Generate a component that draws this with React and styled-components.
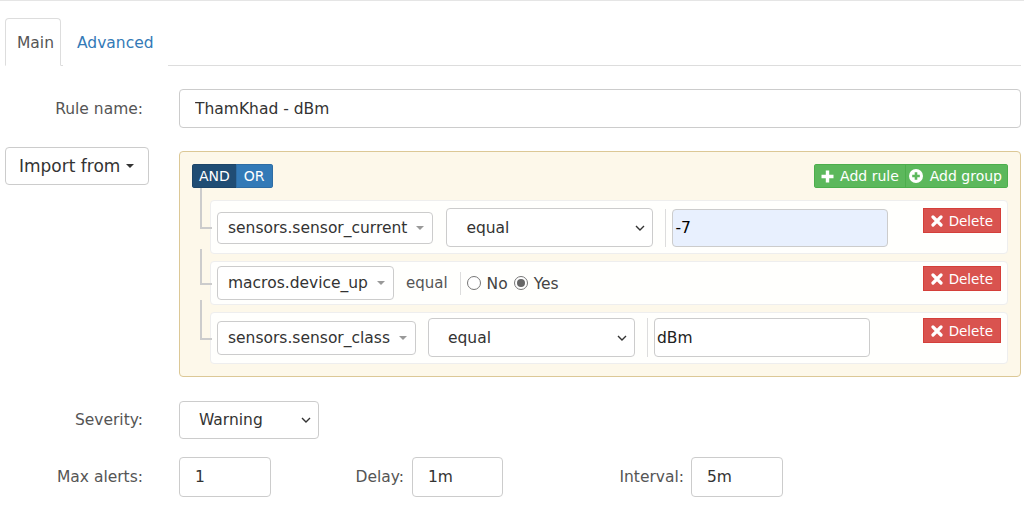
import React from "react";
import styled, { createGlobalStyle } from "styled-components";

const Global = createGlobalStyle`
  body {
    margin: 0;
    background: #fff;
    font-family: "DejaVu Sans", Verdana, sans-serif;
    font-size: 15.5px;
    color: #555;
  }
  * { box-sizing: border-box; }
`;

const Page = styled.div`
  border-top: 1px solid #e5e5e5;
  padding: 0 3px 0 5px;
  height: 506px;
  overflow: hidden;
`;

const TabList = styled.ul`
  display: flex;
  list-style: none;
  margin: 17px 0 0;
  padding: 0;
  border-bottom: 1px solid #ddd;
`;

const Tab = styled.li`
  height: 48px;
  margin-bottom: -1px;
  margin-right: 2px;
  padding: ${(p) => (p.$active ? "1px 6px 0 11px" : "1px 13px 0")};
  display: flex;
  align-items: center;
  border: 1px solid ${(p) => (p.$active ? "#ddd" : "transparent")};
  border-bottom-color: ${(p) => (p.$active ? "#fff" : "transparent")};
  border-radius: 4px 4px 0 0;
  background: #fff;
  color: ${(p) => (p.$active ? "#555" : "#337ab7")};
  cursor: pointer;
`;

const Row = styled.div`
  display: grid;
  grid-template-columns: 144px 1fr;
  column-gap: 30px;
  align-items: ${(p) => p.$align || "center"};
  margin-top: ${(p) => p.$mt}px;
`;

const Label = styled.label`
  text-align: right;
  padding-right: 6px;
  color: #555;
`;

const TextInput = styled.input`
  height: ${(p) => p.$h || 39}px;
  width: ${(p) => (p.$w ? p.$w + "px" : "100%")};
  border: 1px solid #ccc;
  border-radius: 4px;
  padding: 0 ${(p) => p.$px ?? 15}px;
  font: inherit;
  color: ${(p) => p.$color || "#333"};
  background: ${(p) => p.$bg || "#fff"};
  outline: none;
`;

const ImportButton = styled.button`
  height: 38px;
  display: flex;
  align-items: center;
  gap: 6px;
  padding: 0 14px 0 13px;
  border: 1px solid #ccc;
  border-radius: 4px;
  background: #fff;
  color: #333;
  font-family: inherit;
  font-size: 17px;
  white-space: nowrap;
`;

const Caret = styled.span`
  width: 0;
  height: 0;
  border-left: ${(p) => p.$s || 4.5}px solid transparent;
  border-right: ${(p) => p.$s || 4.5}px solid transparent;
  border-top: ${(p) => p.$s || 4.5}px solid ${(p) => p.$color || "#333"};
`;

const Builder = styled.div`
  margin-top: 4px;
  padding: 12px;
  border: 1px solid #dcc896;
  border-radius: 4px;
  background: #fdf8ea;
`;

const GroupHeader = styled.div`
  display: flex;
  justify-content: space-between;
  align-items: center;
`;

const BtnGroup = styled.div`
  display: flex;
  border-radius: 3px;
  overflow: hidden;
`;

const SmallBtn = styled.button`
  height: 24px;
  display: flex;
  align-items: center;
  gap: ${(p) => p.$gap ?? 5}px;
  padding: 0 ${(p) => p.$pr ?? p.$px ?? 6}px 0 ${(p) => p.$px ?? 6}px;
  font-family: inherit;
  font-size: 14px;
  color: #fff;
  border: 1px solid ${(p) => p.$border};
  background: ${(p) => p.$bg};
  margin-left: -1px;
  &:first-child { margin-left: 0; }
`;

const RulesList = styled.div`
  display: flex;
  flex-direction: column;
  gap: 7px;
  margin: 12px 0 0 18px;
`;

const Rule = styled.div`
  position: relative;
  display: flex;
  align-items: center;
  padding: ${(p) => p.$pt}px 6px ${(p) => p.$pb}px 6px;
  border: 1px solid #eee;
  border-radius: 4px;
  background: rgba(255, 255, 255, 0.88);

  &::before {
    content: "";
    position: absolute;
    left: -11px;
    top: -13px;
    width: 10px;
    height: calc(50% + 13px);
    border-left: 2px solid #ccc;
    border-bottom: 2px solid #ccc;
  }
`;

const FieldSelect = styled.div`
  height: ${(p) => p.$h || 33}px;
  display: flex;
  align-items: center;
  gap: 9px;
  padding: 0 8px 0 10px;
  border: 1px solid #ccc;
  border-radius: 4px;
  background: #fff;
  color: #333;
  white-space: nowrap;
`;

const SelectBox = styled.div`
  position: relative;
  width: ${(p) => p.$w}px;
  height: ${(p) => p.$h || 39}px;
  margin-left: ${(p) => p.$ml || 0}px;
  border: 1px solid #ccc;
  border-radius: 4px;
  background: #fff;
  color: #333;
  display: flex;
  align-items: center;
  padding-left: 19px;

  svg {
    position: absolute;
    right: 7px;
    top: 50%;
    margin-top: -3px;
  }
`;

const OperatorText = styled.span`
  margin-left: 12px;
  color: #555;
  font-size: 15px;
`;

const ValueContainer = styled.div`
  display: flex;
  align-items: center;
  gap: 6px;
  margin-left: 12px;
  padding-left: 6px;
  border-left: 1px solid #ddd;
  min-height: ${(p) => p.$minh || 0}px;
  color: #333;
`;

const Radio = styled.input`
  appearance: none;
  margin: 0;
  width: 14px;
  height: 14px;
  border-radius: 50%;
  border: 1px solid #777;
  background: #fff;
  position: relative;
  &:checked::after {
    content: "";
    position: absolute;
    inset: 2px;
    border-radius: 50%;
    background: #666;
  }
`;

const RadioLabel = styled.span`
  color: #444;
  margin-top: 2px;
`;

const DeleteBtn = styled(SmallBtn)`
  align-self: flex-start;
  margin-left: auto;
  height: 25px;
  font-size: 13.5px;
  padding: 0 7px;
`;

const InlineLabel = styled.label`
  width: ${(p) => p.$w}px;
  text-align: right;
  padding-right: ${(p) => p.$pr}px;
  color: #555;
`;

const Inline = styled.div`
  display: flex;
  align-items: center;
`;

const Chevron = () => (
  <svg width="10" height="6" viewBox="0 0 10 6">
    <polyline points="1,1 5,5 9,1" fill="none" stroke="#333" strokeWidth="1.4" />
  </svg>
);

const XIcon = () => (
  <svg width="12" height="12" viewBox="0 0 12 12">
    <path d="M2 2 L10 10 M10 2 L2 10" stroke="#fff" strokeWidth="3.2" strokeLinecap="round" />
  </svg>
);

const PlusIcon = () => (
  <svg width="13" height="13" viewBox="0 0 13 13">
    <path d="M6.5 0.5 V12.5 M0.5 6.5 H12.5" stroke="#fff" strokeWidth="3.4" />
  </svg>
);

const PlusCircleIcon = () => (
  <svg width="14" height="14" viewBox="0 0 14 14">
    <circle cx="7" cy="7" r="7" fill="#fff" />
    <path d="M7 3.2 V10.8 M3.2 7 H10.8" stroke="#5cb85c" strokeWidth="2.6" />
  </svg>
);

const Delete = () => (
  <DeleteBtn $bg="#d9534f" $border="#d43f3a" $gap={6}>
    <XIcon />
    Delete
  </DeleteBtn>
);

export default function App() {
  return (
    <Page>
      <Global />
      <TabList>
        <Tab $active>Main</Tab>
        <Tab>Advanced</Tab>
      </TabList>

      <Row $mt={23}>
        <Label>Rule name:</Label>
        <TextInput defaultValue="ThamKhad - dBm" />
      </Row>

      <Row $mt={19} $align="start">
        <div>
          <ImportButton>
            Import from <Caret />
          </ImportButton>
        </div>
        <Builder>
          <GroupHeader>
            <BtnGroup>
              <SmallBtn $bg="#204d74" $border="#1d4568" $px={6}>AND</SmallBtn>
              <SmallBtn $bg="#337ab7" $border="#2e6da4" $px={7}>OR</SmallBtn>
            </BtnGroup>
            <BtnGroup>
              <SmallBtn $bg="#5cb85c" $border="#4cae4c" $px={6} $gap={6}>
                <PlusIcon />
                Add rule
              </SmallBtn>
              <SmallBtn $bg="#5cb85c" $border="#4cae4c" $px={3} $pr={5} $gap={7}>
                <PlusCircleIcon />
                Add group
              </SmallBtn>
            </BtnGroup>
          </GroupHeader>

          <RulesList>
            <Rule $pt={7} $pb={6}>
              <FieldSelect $h={32}>
                sensors.sensor_current <Caret $s={4} $color="#999" />
              </FieldSelect>
              <SelectBox $w={207} $ml={13}>
                equal
                <Chevron />
              </SelectBox>
              <ValueContainer>
                <TextInput $w={216} $h={38} $px={2} $bg="#e8f0fe" $color="#000" defaultValue="-7" />
              </ValueContainer>
              <Delete />
            </Rule>

            <Rule $pt={4} $pb={4}>
              <FieldSelect $h={34}>
                macros.device_up <Caret $s={4} $color="#999" />
              </FieldSelect>
              <OperatorText>equal</OperatorText>
              <ValueContainer $minh={23}>
                <Radio type="radio" name="up" />
                <RadioLabel>No</RadioLabel>
                <Radio type="radio" name="up" defaultChecked />
                <RadioLabel>Yes</RadioLabel>
              </ValueContainer>
              <Delete />
            </Rule>

            <Rule $pt={5} $pb={6}>
              <FieldSelect $h={34}>
                sensors.sensor_class <Caret $s={4} $color="#999" />
              </FieldSelect>
              <SelectBox $w={207} $ml={12}>
                equal
                <Chevron />
              </SelectBox>
              <ValueContainer>
                <TextInput $w={216} $h={39} $px={2} $color="#222" defaultValue="dBm" />
              </ValueContainer>
              <Delete />
            </Rule>
          </RulesList>
        </Builder>
      </Row>

      <Row $mt={24}>
        <Label>Severity:</Label>
        <div>
          <SelectBox $w={140} $h={38}>
            Warning
            <Chevron />
          </SelectBox>
        </div>
      </Row>

      <Row $mt={18}>
        <Label>Max alerts:</Label>
        <Inline>
          <TextInput $w={92} $h={40} defaultValue="1" />
          <InlineLabel $w={141} $pr={8}>Delay:</InlineLabel>
          <TextInput $w={91} $h={40} defaultValue="1m" />
          <InlineLabel $w={188} $pr={7}>Interval:</InlineLabel>
          <TextInput $w={92} $h={40} defaultValue="5m" />
        </Inline>
      </Row>
    </Page>
  );
}
